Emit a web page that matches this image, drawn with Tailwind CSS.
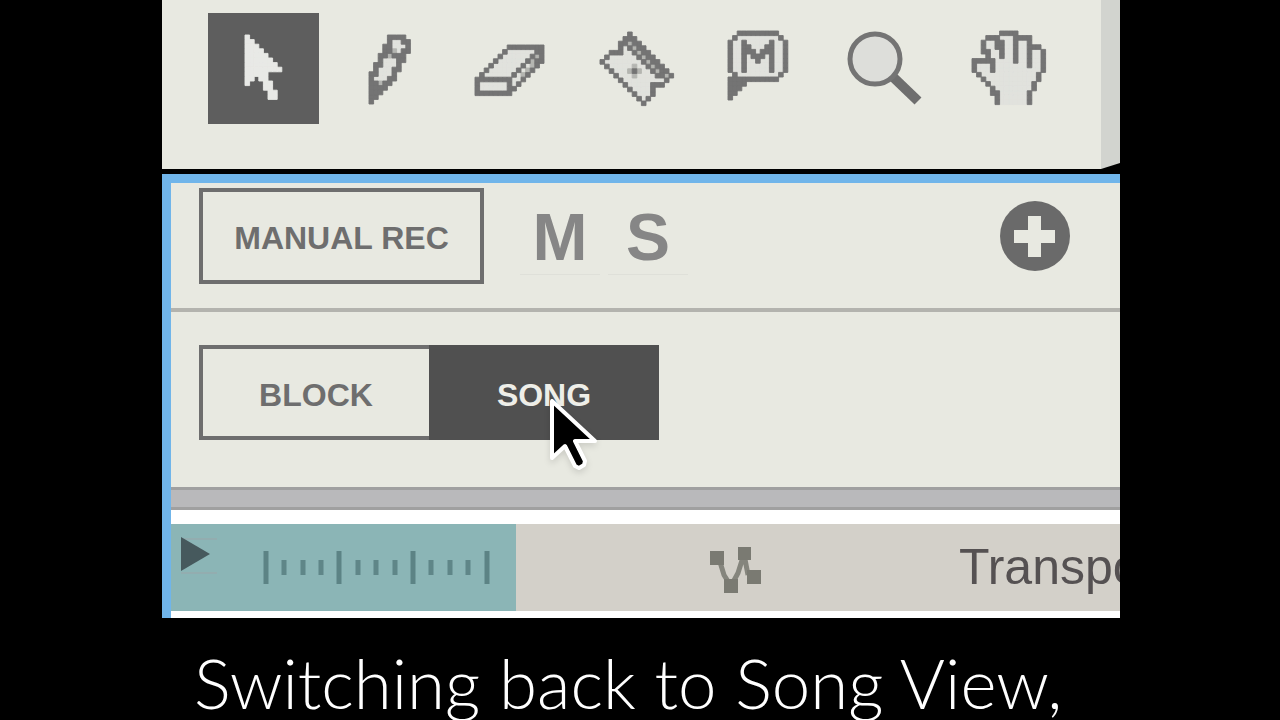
<!DOCTYPE html>
<html lang="en">
<head>
  <meta charset="UTF-8" />
  <meta name="viewport" content="width=device-width, initial-scale=1" />
  <title>Song View</title>
  <script src="https://cdn.jsdelivr.net/npm/@tailwindcss/browser@4"></script>
</head>
<body class="bg-black min-h-screen overflow-hidden font-['Liberation_Sans',Arial,sans-serif]">
  <main class="pl-[162px] pr-40">

    <!-- Tools -->
    <div class="flex justify-between bg-[#e8e9e1] h-[169px] overflow-hidden">
      <div id="toolbar" class="flex shrink-0 gap-[14px] pl-[46px] pt-[13px]"></div>
      <svg class="shrink-0" width="19" height="169" viewBox="0 0 19 169" aria-hidden="true">
        <rect width="19" height="169" fill="#d2d4cf" />
        <path d="M0 169L19 163V169Z" fill="#000" />
      </svg>
    </div>

    <!-- Sequencer -->
    <section class="mt-[5px] border-t-[9px] border-l-[9px] border-[#70b5ea] bg-[#e8e9e1]">
      <div class="flex items-start h-[129px] pt-[5px] pl-7 pr-[50px] border-b-4 border-[#b3b3ae]">
        <button class="w-[285px] h-24 shrink-0 border-4 border-[#6e6e6e] text-[#6e6e6e] text-[32px] leading-[48px] font-bold pt-1 cursor-pointer">MANUAL REC</button>
        <div class="flex gap-2 ml-9 mt-3">
          <button aria-label="Mute" class="w-20 h-[75px] border-b border-[#dfe0d9] text-[#868686] text-[66px] leading-[74px] font-bold cursor-pointer">M</button>
          <button aria-label="Solo" class="w-20 h-[75px] border-b border-[#dfe0d9] text-[#868686] text-[66px] leading-[74px] font-bold cursor-pointer">S</button>
        </div>
        <button aria-label="Add track" class="ml-auto mt-[13px] shrink-0 cursor-pointer">
          <svg class="block" width="70" height="70" viewBox="0 0 70 70">
            <circle cx="35" cy="35" r="35" fill="#6a6a6a" />
            <path d="M28 15H41V29H55V42H41V56H28V42H14V29H28Z" fill="#e8e9e1" />
          </svg>
        </button>
      </div>

      <div class="flex pt-[33px] pl-7 h-[175px]">
        <button class="w-[230px] h-[95px] border-4 border-r-0 border-[#6e6e6e] text-[#6e6e6e] text-[32px] font-bold pt-1 cursor-pointer">BLOCK</button>
        <button class="relative w-[230px] h-[95px] bg-[#505050] text-[#eeeee8] text-[32px] font-bold pt-1 cursor-pointer">SONG
          <svg class="absolute left-[112px] top-11 drop-shadow-md" width="66" height="90" viewBox="541 389 66 90" aria-hidden="true">
            <path d="M552 401V458L565 446L575 466L579 468L584 465L585 461L575 441L595 441Z" fill="#000" stroke="#fff" stroke-width="4" stroke-linejoin="round" />
          </svg>
        </button>
      </div>

      <div class="h-[23px] bg-[#b9b9bb] border-y-3 border-[#a0a0a0]"></div>

      <div class="bg-white pt-[14px] pb-[7px]">
        <div class="flex h-[87px]">
          <div class="w-[345px] shrink-0 bg-[#8bb5b6]">
            <svg width="345" height="87" viewBox="171 524 345 87" aria-hidden="true">
              <path d="M181 539H217M181 573H217" stroke="#9aa5a9" stroke-width="1" />
              <path d="M181 537L210 554L181 571Z" fill="#46595d" />
              <path d="M266 551V584M339 551V584M413 551V584M487 551V584" stroke="#5c8385" stroke-width="5" />
              <path d="M284 560V575M303 560V575M321 560V575M358 560V575M376 560V575M395 560V575M431 560V575M450 560V575M468 560V575" stroke="#5f8688" stroke-width="5" />
            </svg>
          </div>
          <div class="flex flex-1 min-w-0 items-center bg-[#d3d0c9] pl-[194px] overflow-hidden">
            <svg class="shrink-0" width="52" height="87" viewBox="710 524 52 87" aria-hidden="true">
              <path d="M720 562L724 575L731 586L738 573L744 554L748 575" fill="none" stroke="#85857d" stroke-width="5" />
              <path d="M710 551h14v14h-14zM724 579h14v14h-14zM738 547h13v13h-13zM747 570h14v14h-14z" fill="#7a7a72" />
            </svg>
            <span class="ml-[197px] text-[50px] leading-[87px] text-[#555152] whitespace-nowrap">Transport</span>
          </div>
        </div>
      </div>
    </section>

    <p class="mt-6 pl-8 font-['Lato',sans-serif] font-light text-white text-[69px] leading-[82px] whitespace-nowrap">Switching back to Song View,</p>
  </main>

  <script>
    // "#" = outline, "o" = half tone, "+" = light fill
    const SHADES = { "+": "#e1e2dd", "o": "#b4b5b1", "#": "#747474" };
    const CELL = 4.6;

    const tools = [
      { name: "Select", active: true, x: 37, y: 22, rows: [
        "#", "##", "###", "####", "#####", "######", "#######", "########",
        "#####", "##.##", "#...##", "....##", ".....##", ".....##" ] },
      { name: "Pencil", x: 36, y: 22, rows: [
        "....####.",
        "....#++##",
        "...##+++#",
        "...##o+##",
        "..##o###.",
        "..#+++##.",
        ".##+++#..",
        ".#+++##..",
        "##+++#...",
        "#+++##...",
        "##o##....",
        "####.....",
        "###......",
        "##.......",
        "#........" ] },
      { name: "Eraser", x: 17, y: 32, rows: [
        ".......########",
        "......#++++++##",
        ".....#++++++#o#",
        "....#++++++#o##",
        "...#++++++#+o#.",
        "..#++++++#+o#..",
        ".#++++++#+o#...",
        "########++#....",
        "#++++++#+#.....",
        "#++++++##......",
        "########......." ] },
      { name: "Razor", x: 17, y: 19, rows: [
        "......#.........",
        ".....###........",
        "....##o##.......",
        "....#+#o##......",
        "..###++#o##.....",
        ".#++++++#o##....",
        "#++++++++#o##...",
        ".#+++++o++#o##..",
        "..#+++o#o++#o##.",
        "...#+++o++++##o#",
        "....#+++++++++#.",
        ".....#+++++###..",
        "......#++++#....",
        ".......#+++#....",
        "........#+#.....",
        ".........#......" ] },
      { name: "Mute", x: 20, y: 18, rows: [
        "..#########..",
        ".#+++++++++#.",
        "#++#+++++#++#",
        "#++##+++##++#",
        "#++###+###++#",
        "#++#+###+#++#",
        "#++#++#++#++#",
        "#++#+++++#++#",
        "#++#+++++#++#",
        ".#+++++++++#.",
        "###########..",
        "####.........",
        "###..........",
        "##...........",
        "#............" ] },
      { name: "Magnify", svg: `
        <path d="M60 64L85 88" stroke="#6e6e6e" stroke-width="10" />
        <circle cx="42" cy="46" r="25" fill="#dddeda" stroke="#747474" stroke-width="5" />` },
      { name: "Hand", x: 14, y: 18, rows: [
        "......####......",
        "...###+++####...",
        "..#++##++#++#...",
        "..#++##++#++###.",
        "..##++#++#++#++#",
        "...#++#++#++#++#",
        "#####++++#++#++#",
        "#+++#+++++++#++#",
        "#+++#++++++++++#",
        ".#++++++++++++#.",
        "..#+++++++++++#.",
        "...#+++++++++#..",
        "....#++++++++#..",
        "....##++++++#...",
        ".....#++++++#...",
        ".....#++++++#..." ] }
    ];

    // one path per shade, with a thin round stroke that joins diagonal cells
    function drawRows(tool) {
      let paths = "";
      for (const [shade, colour] of Object.entries(SHADES)) {
        let d = "";
        tool.rows.forEach((row, r) => {
          [...row].forEach((c, i) => {
            if (c === shade) d += `M${i} ${r}h1v1h-1z`;
          });
        });
        const fill = tool.active ? "#e8e9e6" : colour;
        paths += `<path d="${d}" fill="${fill}" stroke="${fill}" stroke-width="0.2" stroke-linejoin="round" />`;
      }
      return `<g transform="translate(${tool.x} ${tool.y}) scale(${CELL})">${paths}</g>`;
    }

    document.getElementById("toolbar").innerHTML = tools.map(t => `
      <button aria-label="${t.name}" class="size-[111px] shrink-0 cursor-pointer ${t.active ? "bg-[#5e5e5e]" : ""}">
        <svg class="block" width="111" height="111" viewBox="0 0 111 111">${t.svg || drawRows(t)}</svg>
      </button>
    `).join("");
  </script>
</body>
</html>
